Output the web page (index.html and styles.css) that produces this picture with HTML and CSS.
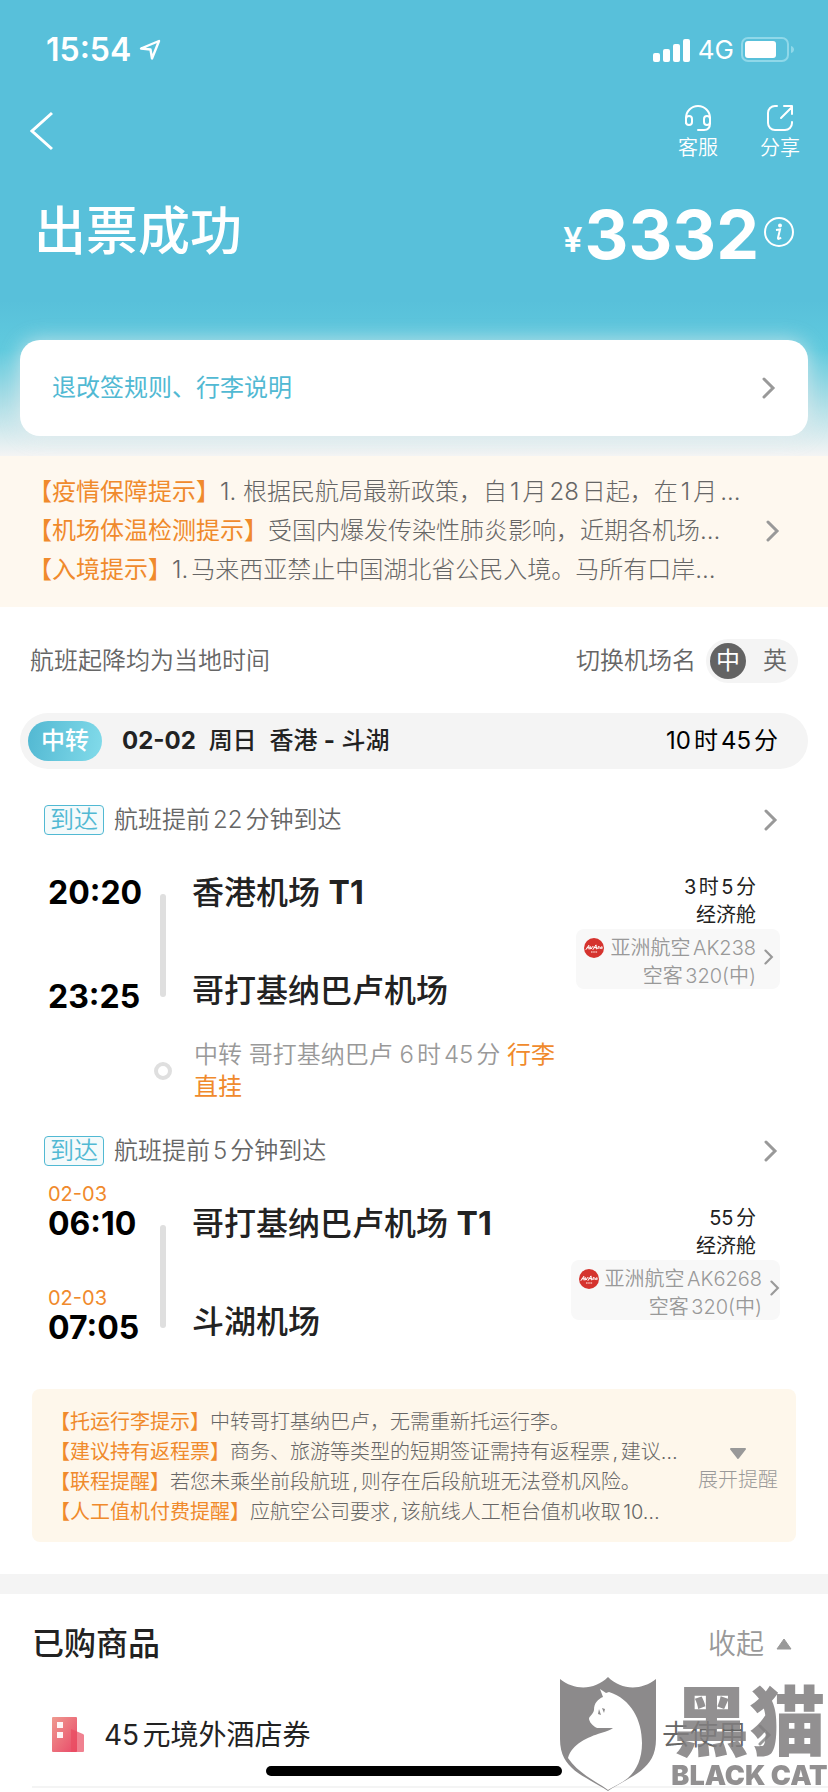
FILE: index.html
```html
<!DOCTYPE html>
<html lang="zh-CN">
<head>
    <meta charset="UTF-8">
    <meta name="viewport" content="width=device-width, initial-scale=1.0">
    <title>订单详情</title>
    <link rel="stylesheet" href="styles.css">
</head>
<body>
    <!-- 公用图标 -->
    <svg class="defs" width="0" height="0">
        <symbol id="chevron" viewBox="0 0 14 22"><path d="M2 2l9 9-9 9" fill="none" stroke="currentColor" stroke-width="3" stroke-linecap="round" stroke-linejoin="miter"/></symbol>
        <symbol id="airasia" viewBox="0 0 20 20">
            <circle cx="10" cy="10" r="10" fill="#d5332e"/>
            <path d="M2 11.500l2.800-4.200.3 3.800M3.200 9.800h2.200M6.500 8.700l-.5 2.200 1-.4M7.500 10.600l.8-1.900.9.100M9 11.500l3-4.600.4 4M10.200 9.600h2.200M14.600 8.600c-1.600 0-.2 1 -.7 1.700-.3.400-.8.300-1 .1M15.200 8.700l-.3 1.900M18 8.800c-1.600-.5-2.200 1.900-1 1.800l1-1.300-.1 1.400" fill="none" stroke="#fff" stroke-width="1" stroke-linecap="round" stroke-linejoin="round"/>
            <path d="M7 14h6.500" stroke="#f3b5b0" stroke-width="1.500" stroke-dasharray="1.200 .4"/>
        </symbol>
    </svg>

    <header class="header">
        <div class="status">
            <span class="clock">15:54</span>
            <svg class="locate" width="22" height="22" viewBox="0 0 22 22"><path d="M2 9.500L20 2 13 19.500l-1.500-9z" fill="none" stroke="#fff" stroke-width="2.400" stroke-linejoin="round"/></svg>
            <svg class="signal" width="38" height="24" viewBox="0 0 38 24" fill="#fff"><rect x="0" y="15" width="7" height="9" rx="2"/><rect x="10" y="11" width="7" height="13" rx="2"/><rect x="20" y="6" width="7" height="18" rx="2"/><rect x="30" y="1" width="7" height="23" rx="2"/></svg>
            <span class="network">4G</span>
            <svg class="battery" width="54" height="26" viewBox="0 0 54 26"><rect x="1" y="1" width="46" height="23" rx="6" fill="none" stroke="#8fd8e9" stroke-width="2"/><rect x="4" y="4" width="31" height="17" rx="3" fill="#fff"/><path d="M50 9c4 1 4 6 0 7z" fill="#8fd8e9"/></svg>
        </div>

        <nav class="nav">
            <button class="back" aria-label="返回"><svg width="24" height="40" viewBox="0 0 24 40"><path d="M22 2L2 20l20 18" fill="none" stroke="#fff" stroke-width="3"/></svg></button>
            <button class="nav-btn">
                <svg width="28" height="28" viewBox="0 0 28 28" fill="none" stroke="#fff" stroke-width="2" stroke-linecap="round"><path d="M2 19v-5a12 12 0 0 1 24 0v5c0 4-2 7-6 7h-6"/><rect x="2" y="12" width="6" height="9" rx="3"/><rect x="20" y="12" width="6" height="9" rx="3"/></svg>
                客服
            </button>
            <button class="nav-btn">
                <svg width="28" height="28" viewBox="0 0 28 28" fill="none" stroke="#fff" stroke-width="2" stroke-linecap="round" stroke-linejoin="round"><path d="M11 2H9a7 7 0 0 0-7 7v10a7 7 0 0 0 7 7h10a7 7 0 0 0 7-7v-1M15 14L26 3M18 2h8v8"/></svg>
                分享
            </button>
        </nav>

        <div class="summary">
            <h1>出票成功</h1>
            <span class="yen">¥</span>
            <span class="price">3332</span>
            <button class="info" aria-label="价格明细"><svg width="30" height="30" viewBox="0 0 30 30"><circle cx="15" cy="15" r="14" fill="none" stroke="#fff" stroke-width="2"/><circle cx="16" cy="8.500" r="2" fill="#fff"/><path d="M12 13l4-.5-2 8.500c-.3 1.500 1.500 1 3-.5" fill="none" stroke="#fff" stroke-width="2"/></svg></button>
        </div>

        <a class="rules" href="#">退改签规则、行李说明<svg class="chev" width="14" height="22"><use href="#chevron"/></svg></a>
    </header>

    <a class="notice" href="#">
        <span class="notice-text">
            <span><b>【疫情保障提示】</b>1. 根据民航局最新政策，自1月28日起，在1月...</span>
            <span><b>【机场体温检测提示】</b>受国内爆发传染性肺炎影响，近期各机场…</span>
            <span><b>【入境提示】</b>1.马来西亚禁止中国湖北省公民入境。马所有口岸…</span>
        </span>
        <svg class="chev" width="14" height="22"><use href="#chevron"/></svg>
    </a>

    <main>
        <div class="local">
            <span>航班起降均为当地时间</span>
            <fieldset class="switch">
                <legend>切换机场名</legend>
                <label><input type="radio" name="lang" checked><span>中</span></label>
                <label><input type="radio" name="lang"><span>英</span></label>
            </fieldset>
        </div>

        <div class="route">
            <span class="badge">中转</span>
            <h2><strong>02-02</strong>&nbsp; 周日&nbsp; 香港 <strong>-</strong> 斗湖</h2>
            <span>10时45分</span>
        </div>

        <section class="leg">
            <a class="leg-head" href="#"><span class="tag">到达</span>航班提前22分钟到达<svg class="chev" width="14" height="22"><use href="#chevron"/></svg></a>
            <div class="leg-body">
                <div class="times">
                    <div class="stop"><span class="date"></span><time>20:20</time></div>
                    <div class="stop"><span class="date"></span><time>23:25</time></div>
                </div>
                <div class="line"></div>
                <div class="airports"><h3>香港机场 <strong>T1</strong></h3><h3>哥打基纳巴卢机场</h3></div>
                <div class="flight">
                    <p>3时5分</p>
                    <p>经济舱</p>
                    <a class="plane" href="#">
                        <span class="plane-text"><span class="airline"><svg width="20" height="20"><use href="#airasia"/></svg>亚洲航空AK238</span><span>空客320(中)</span></span>
                        <svg class="chev" width="10" height="16"><use href="#chevron"/></svg>
                    </a>
                </div>
            </div>
        </section>

        <div class="transfer">
            <i class="dot"></i>
            <p>中转 哥打基纳巴卢 6时45分 <b>行李直挂</b></p>
        </div>

        <section class="leg">
            <a class="leg-head" href="#"><span class="tag">到达</span>航班提前5分钟到达<svg class="chev" width="14" height="22"><use href="#chevron"/></svg></a>
            <div class="leg-body">
                <div class="times">
                    <div class="stop"><span class="date">02-03</span><time>06:10</time></div>
                    <div class="stop"><span class="date">02-03</span><time>07:05</time></div>
                </div>
                <div class="line"></div>
                <div class="airports"><h3>哥打基纳巴卢机场 <strong>T1</strong></h3><h3>斗湖机场</h3></div>
                <div class="flight">
                    <p>55分</p>
                    <p>经济舱</p>
                    <a class="plane plane-tight" href="#">
                        <span class="plane-text"><span class="airline"><svg width="20" height="20"><use href="#airasia"/></svg>亚洲航空AK6268</span><span>空客320(中)</span></span>
                        <svg class="chev" width="10" height="16"><use href="#chevron"/></svg>
                    </a>
                </div>
            </div>
        </section>

        <div class="tips">
            <div class="tips-text">
                <span><b>【托运行李提示】</b>中转哥打基纳巴卢，无需重新托运行李。</span>
                <span><b>【建议持有返程票】</b>商务、旅游等类型的短期签证需持有返程票,建议…</span>
                <span><b>【联程提醒】</b>若您未乘坐前段航班,则存在后段航班无法登机风险。</span>
                <span><b>【人工值机付费提醒】</b>应航空公司要求,该航线人工柜台值机收取10…</span>
            </div>
            <button class="expand"><svg width="18" height="13" viewBox="0 0 18 13"><path d="M2 2h14L9 11z" fill="#999" stroke="#999" stroke-width="2" stroke-linejoin="round"/></svg>展开提醒</button>
        </div>
    </main>

    <section class="goods">
        <div class="goods-head">
            <h2>已购商品</h2>
            <button class="fold">收起<svg width="16" height="12" viewBox="0 0 16 12"><path d="M1 11h14L8 1z" fill="#999" stroke="#999" stroke-linejoin="round"/></svg></button>
        </div>
        <div class="item">
            <svg class="hotel" width="32" height="36" viewBox="0 0 32 36">
                <defs><linearGradient id="hg" x1="0" y1="0" x2="1" y2="1"><stop offset="0" stop-color="#ef9a90"/><stop offset="1" stop-color="#e94868"/></linearGradient></defs>
                <rect width="25" height="35" rx="1" fill="url(#hg)"/>
                <path d="M19 12l12 5a2 2 0 0 1 1 2v15a1 1 0 0 1-1 1H19z" fill="#e94b61" opacity=".7"/>
                <path d="M5 5h6v6H5zM5 15h6v6H5z" fill="#fff" opacity=".92"/>
            </svg>
            <span class="item-name">45元境外酒店券</span>
            <a class="use" href="#">去使用<svg class="chev" width="14" height="22"><use href="#chevron"/></svg></a>
        </div>
    </section>

    <div class="home-bar"></div>

    <div class="watermark">
        <svg width="98" height="116" viewBox="0 0 98 116">
            <path d="M1 3c15 12 35 11 48-2 13 13 33 14 48 2v60c0 31-24 36-48 52C25 99 1 94 1 63z" fill="#8c8a8b"/>
            <path d="M41 13l6 4 3-1c22 7 33 28 33 51 0 15-5 27-14 35-6 5-14 8-20 12C35 104 19 97 9 82c4-14 20-21 33-25 6-2 10-3 12-5H38c-2-1-7-4-8-9 0-3 4-4 5-9 0-7 4-11 9-13z" fill="#fff"/>
            <path d="M40 33l-1 5 3 1zM43 32l3 1-1 4z" fill="#8c8a8b"/>
        </svg>
        <div class="mark-text"><span class="mark-cn">黑猫</span><span class="mark-en">BLACK CAT</span></div>
    </div>
</body>
</html>
```
FILE: styles.css
```css
* {
    box-sizing: border-box;
}

body {
    margin: 0;
    min-height: 100vh;
    position: relative;
    background: #fff;
    color: #222;
    font-family: Inter, "Noto Sans CJK SC", sans-serif;
    font-size: 24px;
    font-weight: 350;
    line-height: 32px;
    text-autospace: normal;
}

h1, h2, h3, p {
    margin: 0;
}

b {
    color: #f08a2c;
    font-weight: 400;
}

strong {
    font-weight: 700;
}

a {
    color: inherit;
    text-decoration: none;
}

button {
    border: 0;
    padding: 0;
    background: none;
    color: inherit;
    font: inherit;
}

svg {
    display: block;
    flex: none;
}

.defs {
    position: absolute;
}

.chev {
    color: #999;
    margin-left: auto;
}

/* 顶部 */
.header {
    color: #fff;
    padding: 28px 20px 20px;
    background: linear-gradient(#58c0da 0, #58c0da 300px, #60cade 350px, #a9dde6 400px, #f4f4f4 456px);
}

.status {
    display: flex;
    align-items: center;
    height: 44px;
    padding: 0 13px 0 26px;
}

.clock {
    font-size: 32px;
    font-weight: 600;
}

.locate {
    margin-left: 8px;
}

.signal {
    margin-left: auto;
}

.network {
    font-size: 26px;
    font-weight: 400;
    margin: 0 7px 0 7px;
}

.nav {
    display: flex;
    align-items: flex-start;
    padding: 32px 8px 0 10px;
    height: 116px;
}

.back {
    margin: 7px auto 0 0;
}

.nav-btn {
    display: flex;
    flex-direction: column;
    align-items: center;
    font-size: 20px;
    line-height: 32px;
    margin-left: 42px;
}

.summary {
    display: flex;
    align-items: center;
    height: 84px;
    padding: 4px 14px 0;
}

h1 {
    margin-right: auto;
    font-size: 52px;
    font-weight: 500;
    line-height: 80px;
}

.yen {
    font-size: 34px;
    font-weight: 600;
    padding-top: 16px;
}

.price {
    font-size: 68px;
    font-weight: 700;
    line-height: 80px;
    padding-top: 4px;
    margin-left: 2px;
}

.info {
    margin-left: 5px;
}

.rules {
    display: flex;
    align-items: center;
    height: 96px;
    margin-top: 68px;
    padding: 0 32px;
    border-radius: 20px;
    background: #fff;
    color: #51b9d3;
    font-weight: 400;
    box-shadow: 0 0 20px rgba(232, 236, 238, .7);
}

/* 提示 */
.notice {
    display: flex;
    align-items: center;
    padding: 16px 48px 18px 28px;
    background: #fef8ef;
    color: #666;
    font-weight: 300;
    line-height: 39px;
}

.notice-text,
.tips-text {
    display: flex;
    flex-direction: column;
    min-width: 0;
    white-space: nowrap;
}

.local {
    display: flex;
    align-items: center;
    justify-content: space-between;
    padding: 32px 30px 30px;
    color: #666;
}

.switch {
    display: flex;
    align-items: center;
    margin: 0;
    padding: 4px;
    border: 0;
    border-radius: 22px;
    background: #f4f4f4;
    position: relative;
}

.switch legend {
    position: absolute;
    right: 100%;
    top: 6px;
    padding: 0 10px 0 0;
    white-space: nowrap;
}

.switch label + label {
    margin-left: 10px;
}

.switch input {
    position: absolute;
    opacity: 0;
}

.switch label span {
    display: block;
    width: 36px;
    line-height: 36px;
    margin-right: 1px;
    border-radius: 18px;
    text-align: center;
}

.switch input:checked + span {
    background: #636363;
    color: #fff;
    font-weight: 400;
}

.route {
    display: flex;
    align-items: center;
    margin: 0 20px;
    padding: 8px 30px 8px 8px;
    border-radius: 28px;
    background: #f4f4f4;
    color: #000;
    font-weight: 400;
}

.route h2 {
    margin: 0 auto 0 20px;
    color: #222;
    font-size: 24px;
    font-weight: 500;
}

.badge {
    width: 74px;
    border-radius: 20px;
    background: linear-gradient(100deg, #52b8d2, #82dbea);
    color: #fff;
    font-weight: 500;
    line-height: 40px;
    text-align: center;
}

/* 航段 */
.leg-head {
    display: flex;
    align-items: center;
    height: 62px;
    padding: 0 50px 0 44px;
    color: #666;
}

.route + .leg {
    margin-top: 20px;
}

.tag {
    margin-right: 10px;
    padding: 0 5px;
    border: 1px solid #51b9d3;
    border-radius: 4px;
    background: #f4fafb;
    color: #51b9d3;
    line-height: 28px;
}

.leg-body {
    display: flex;
    padding: 0 48px 0 48px;
}

.times {
    width: 112px;
}

.stop + .stop {
    margin-top: 44px;
}

.date,
.stop time {
    display: block;
}

.date {
    height: 24px;
    color: #f08a2c;
    font-size: 20px;
    font-weight: 400;
    line-height: 24px;
}

.stop time {
    color: #000;
    font-size: 32px;
    font-weight: 700;
    line-height: 36px;
}

.line {
    width: 6px;
    height: 103px;
    margin-top: 43px;
    border-radius: 3px;
    background: #dfdfdf;
}

.airports {
    margin: 22px 0 0 26px;
}

h3 {
    font-size: 32px;
    font-weight: 500;
    line-height: 40px;
}

h3 + h3 {
    margin-top: 58px;
}

.flight {
    display: flex;
    flex-direction: column;
    align-items: flex-end;
    margin: 22px 0 0 auto;
    font-size: 20px;
    font-weight: 400;
    line-height: 28px;
    white-space: nowrap;
}

.flight p {
    margin-right: 24px;
}

.plane {
    display: flex;
    align-items: flex-start;
    padding: 5px 6px 0 8px;
    height: 60px;
    border-radius: 8px;
    background: #f8f8f8;
    color: #999;
    font-weight: 350;
}

.plane .chev {
    margin-top: 15px;
}

.plane-text {
    display: flex;
    flex-direction: column;
    align-items: flex-end;
    margin-right: 8px;
}

.plane-tight {
    padding-right: 0;
}

.airline {
    display: flex;
    align-items: center;
    gap: 6px;
}

.transfer {
    display: flex;
    align-items: center;
    padding: 24px 48px 17px 154px;
    color: #999;
}

.transfer p {
    width: 380px;
    margin-left: 22px;
}

.dot {
    width: 18px;
    height: 18px;
    border: 4px solid #dfdfdf;
    border-radius: 9px;
}

.tips {
    display: flex;
    align-items: center;
    justify-content: space-between;
    margin: 43px 32px 32px;
    padding: 18px 18px 15px;
    border-radius: 8px;
    background: #fef7eb;
    color: #666;
    font-size: 20px;
    font-weight: 300;
    line-height: 30px;
}

.expand {
    display: flex;
    flex-direction: column;
    align-items: center;
    gap: 6px;
    padding-top: 6px;
    color: #999;
    font-weight: 200;
    line-height: 28px;
    white-space: nowrap;
}

/* 已购商品 */
.goods {
    border-top: 20px solid #f4f4f4;
}

.goods-head {
    display: flex;
    align-items: center;
    justify-content: space-between;
    padding: 2px 36px 0 32px;
    height: 98px;
}

.goods-head h2 {
    font-size: 32px;
    font-weight: 500;
    line-height: 40px;
}

.fold {
    display: flex;
    align-items: center;
    gap: 12px;
    color: #999;
    font-size: 28px;
}

.item {
    display: flex;
    align-items: center;
    height: 96px;
    margin-left: 32px;
    padding: 0 56px 8px 20px;
    border-bottom: 2px solid #f4f4f4;
    font-size: 28px;
}

.item-name {
    margin: 0 auto 0 20px;
    font-weight: 400;
}

.use {
    display: flex;
    align-items: center;
    gap: 12px;
    color: #666;
}

.home-bar {
    position: fixed;
    bottom: 16px;
    left: 50%;
    width: 296px;
    height: 10px;
    margin-left: -148px;
    border-radius: 5px;
    background: #000;
}

.watermark {
    position: absolute;
    right: 2px;
    bottom: 0;
    display: flex;
    gap: 16px;
    color: rgba(128, 126, 127, .86);
    pointer-events: none;
}

.mark-text {
    display: flex;
    flex-direction: column;
    align-items: center;
    width: 153px;
    padding-top: 6px;
}

.mark-cn {
    font-size: 76px;
    font-weight: 900;
    line-height: 80px;
}

.mark-en {
    font-size: 27px;
    font-weight: 900;
    line-height: 28px;
    white-space: nowrap;
}
```
